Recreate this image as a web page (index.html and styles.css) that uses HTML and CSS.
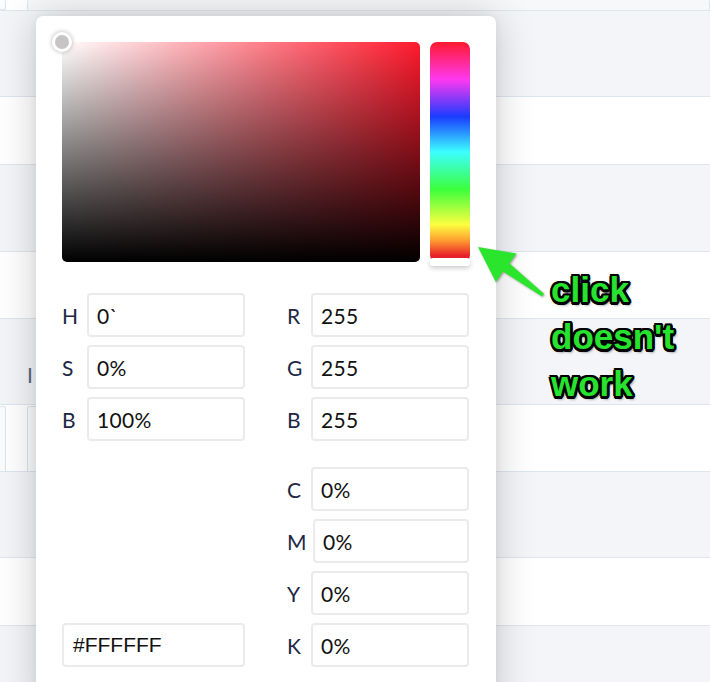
FILE: index.html
```html
<!DOCTYPE html>
<html>
<head>
<meta charset="utf-8">
<link rel="stylesheet" href="styles.css">
</head>
<body>
<div class="page">
  <div class="row row-top"><span class="box box-a"></span><span class="box box-b"></span></div>
  <div class="row grey h86"></div>
  <div class="row white h68"></div>
  <div class="row grey h87"></div>
  <div class="row white h67"></div>
  <div class="row grey h86 row-label"><span class="bg-label">I</span></div>
  <div class="row white h67 row-boxes"><span class="box box-c"></span><span class="box box-d"></span></div>
  <div class="row grey h86"></div>
  <div class="row white h68"></div>
  <div class="row grey fill"></div>
</div>

<div class="picker">
  <div class="picker-top">
    <div class="sat"><span class="sat-handle"></span></div>
    <div class="hue"><span class="hue-handle"></span></div>
  </div>
  <div class="fields">
    <div class="col">
      <div class="field"><span class="lbl">H</span><span class="inp">0`</span></div>
      <div class="field"><span class="lbl">S</span><span class="inp">0%</span></div>
      <div class="field"><span class="lbl">B</span><span class="inp">100%</span></div>
      <div class="inp hex">#FFFFFF</div>
    </div>
    <div class="col col-right">
      <div class="field"><span class="lbl">R</span><span class="inp">255</span></div>
      <div class="field"><span class="lbl">G</span><span class="inp">255</span></div>
      <div class="field field-gap"><span class="lbl">B</span><span class="inp">255</span></div>
      <div class="field"><span class="lbl">C</span><span class="inp">0%</span></div>
      <div class="field"><span class="lbl lbl-wide">M</span><span class="inp">0%</span></div>
      <div class="field"><span class="lbl">Y</span><span class="inp">0%</span></div>
      <div class="field"><span class="lbl">K</span><span class="inp">0%</span></div>
    </div>
  </div>
</div>

<svg class="arrow" width="710" height="682" viewBox="0 0 710 682">
  <polygon points="478,247 516.5,253.5 509.5,263.5 544,293.8 542,296.4 503,271.5 495.8,282" fill="#2be52d"/>
</svg>

<div class="note">click<br>doesn't<br>work</div>
</body>
</html>
```

FILE: styles.css
```css
html, body {
  margin: 0;
  padding: 0;
}

body {
  width: 710px;
  height: 682px;
  overflow: hidden;
  position: relative;
  background: #f3f5f8;
  font-family: "Lato", "Noto Sans", sans-serif;
}

.page {
  display: flex;
  flex-direction: column;
  height: 682px;
}

.row {
  box-sizing: border-box;
  border-top: 1px solid #dfe5ec;
  flex: none;
  display: flex;
}

.row-top {
  height: 10px;
  border-top: none;
  background: #ffffff;
}

.grey { background: #f3f5f9; }
.white { background: #ffffff; }

.h86 { height: 86px; }
.h87 { height: 87px; }
.h68 { height: 68px; }
.h67 { height: 67px; }
.fill { flex: 1; }

.box {
  box-sizing: border-box;
  border: 1px solid #dde3ea;
  background: #fbfcfd;
  border-radius: 2px;
}

.box-a {
  width: 6px;
  height: 10px;
  border-top: none;
  border-left: none;
}

.box-b {
  margin-left: 21px;
  width: 683px;
  height: 11px;
  border-top: none;
  background: #f7f8fa;
}

.row-boxes {
  padding-top: 1px;
}

.box-c {
  width: 6px;
  height: 68px;
  border-left: none;
}

.box-d {
  margin-left: 21px;
  width: 60px;
  height: 68px;
}

.row-label {
  padding: 44px 0 0 27px;
}

.bg-label {
  font-size: 21px;
  line-height: 24px;
  color: #5a6578;
}

/* picker popover */
.picker {
  position: absolute;
  left: 36px;
  top: 16px;
  width: 460px;
  height: 700px;
  box-sizing: border-box;
  padding: 26px 26px 0 26px;
  background: #ffffff;
  border-radius: 7px;
  box-shadow: 0 0 42px rgba(0, 0, 0, 0.2), 0 0 8px rgba(0, 0, 0, 0.06);
}

.picker-top {
  display: flex;
  gap: 10px;
  height: 220px;
}

.sat {
  position: relative;
  width: 358px;
  height: 220px;
  border-radius: 5px;
  background:
    linear-gradient(to top, #000000, rgba(0, 0, 0, 0)),
    linear-gradient(to right, #ffffff, #ff1a2d);
}

.sat-handle {
  position: absolute;
  left: -10px;
  top: -10px;
  width: 20px;
  height: 20px;
  box-sizing: border-box;
  border-radius: 50%;
  border: 3px solid #ffffff;
  background: #c6c4c5;
  box-shadow: 0 0 5px rgba(0, 0, 0, 0.3);
}

.hue {
  position: relative;
  width: 40px;
  height: 220px;
  border-radius: 7px;
  background: linear-gradient(to bottom,
    #ff1a2e 0%,
    #ff38f0 17%,
    #1a3cff 34%,
    #3cffff 50%,
    #3cff3c 67%,
    #fcff40 83%,
    #ffa030 90%,
    #e8222a 97%,
    #e8222a 100%);
}

.hue-handle {
  position: absolute;
  left: 0;
  right: 0;
  top: 216px;
  height: 8px;
  background: #ffffff;
  border-radius: 3px;
  box-shadow: 0 2px 5px rgba(0, 0, 0, 0.22);
}

.fields {
  display: grid;
  grid-template-columns: 183px 182px;
  column-gap: 42px;
  margin-top: 31px;
}

.col {
  display: flex;
  flex-direction: column;
}

.field {
  display: flex;
  align-items: center;
  height: 44px;
  margin-bottom: 8px;
}

.field-gap {
  margin-bottom: 26px;
}

.lbl {
  flex: none;
  width: 25px;
  font-size: 21px;
  color: #1d2746;
}

.col-right .lbl {
  width: 24px;
}

.col-right .lbl-wide {
  width: 26px;
}

.inp {
  flex: 1;
  box-sizing: border-box;
  height: 44px;
  display: flex;
  align-items: center;
  padding-left: 8px;
  border: 2px solid #ebebeb;
  border-radius: 4px;
  font-size: 21px;
  letter-spacing: 0.3px;
  color: #111111;
  background: #ffffff;
}

.hex {
  flex: none;
  margin-top: auto;
  margin-bottom: 8px;
  padding-left: 9px;
  letter-spacing: 0;
  font-family: "Liberation Sans", Arial, sans-serif;
  font-size: 21px;
}

/* annotation */
.arrow {
  position: absolute;
  left: 0;
  top: 0;
  filter: drop-shadow(1px 1px 1px rgba(0, 0, 0, 0.35));
}

.note {
  position: absolute;
  left: 551px;
  top: 266px;
  font-family: "Liberation Sans", Arial, sans-serif;
  font-weight: bold;
  font-size: 35px;
  line-height: 47px;
  color: #27e22e;
  text-shadow:
    2.5px 0 0 #000, -2.5px 0 0 #000, 0 2.5px 0 #000, 0 -2.5px 0 #000,
    1.8px 1.8px 0 #000, -1.8px 1.8px 0 #000, 1.8px -1.8px 0 #000, -1.8px -1.8px 0 #000,
    1px 2.5px 0 #000, 2.5px 1px 0 #000, -1px 2.5px 0 #000, 2.5px -1px 0 #000,
    2px 3px 3px rgba(0, 0, 0, 0.6);
}
```
